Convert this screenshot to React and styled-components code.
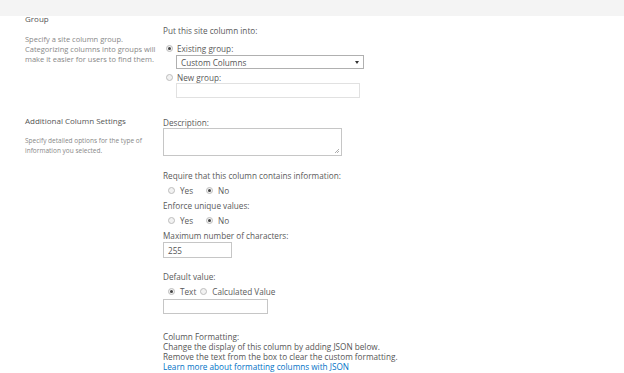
import React from 'react';
import styled, { createGlobalStyle } from 'styled-components';

const GlobalStyle = createGlobalStyle`
  body {
    margin: 0;
    background: #ffffff;
    font-family: "Open Sans", "Noto Sans", sans-serif;
    color: #555555;
  }
`;

const TopBar = styled.div`
  height: 16px;
  background: #f4f4f4;
`;

const Section = styled.div`
  display: grid;
  grid-template-columns: 138px 1fr;
  padding-left: 25px;
  padding-top: ${p => p.$pt || 0}px;
`;

const Info = styled.div`
  display: flex;
  flex-direction: column;
`;

const InfoTitle = styled.div`
  font-size: 8px;
  line-height: 10px;
  color: #555;
  margin-top: ${p => p.$mt || 0}px;
`;

const InfoText = styled.div`
  font-size: ${p => p.$size || 7.5}px;
  line-height: 10px;
  color: #888;
  margin-top: ${p => p.$mt || 0}px;
`;

const Fields = styled.div`
  display: flex;
  flex-direction: column;
  align-items: flex-start;
`;

const Label = styled.div`
  height: 12px;
  display: flex;
  align-items: center;
  font-size: 8.2px;
  white-space: nowrap;
  color: #5a5a5a;
  margin-top: ${p => p.$mt || 0}px;
`;

const Options = styled.div`
  height: 12px;
  display: flex;
  align-items: center;
  gap: ${p => p.$gap || 0}px;
  padding-left: ${p => p.$indent || 0}px;
  margin-top: ${p => p.$mt || 0}px;
`;

const Option = styled.label`
  display: flex;
  align-items: center;
  gap: ${p => p.$gap || 4}px;
  font-size: 8.2px;
  color: #5a5a5a;
  white-space: nowrap;
`;

const Dot = styled.span`
  width: 7px;
  height: 7px;
  box-sizing: border-box;
  border-radius: 50%;
  border: 1px solid #bdbdbd;
  background: #f2f2f2;
  display: flex;
  align-items: center;
  justify-content: center;

  &::after {
    content: '';
    width: 3px;
    height: 3px;
    border-radius: 50%;
    background: ${p => (p.$on ? '#444' : 'transparent')};
  }
`;

const Box = styled.div`
  box-sizing: border-box;
  width: ${p => p.$w}px;
  height: ${p => p.$h}px;
  margin-left: ${p => p.$ml || 0}px;
  margin-top: ${p => p.$mt || 0}px;
  border: 1px solid ${p => p.$border || '#c6c6c6'};
  background: #fff;
  display: flex;
  align-items: center;
  padding: 0 4px;
  font-size: 8.2px;
  color: #555;
  position: relative;
`;

const Caret = styled.span`
  margin-left: auto;
  width: 0;
  height: 0;
  border-left: 2px solid transparent;
  border-right: 2px solid transparent;
  border-top: 3px solid #333;
`;

const Grip = styled.svg`
  position: absolute;
  right: 1px;
  bottom: 1px;
`;

const Note = styled.div`
  margin-top: ${p => p.$mt || 0}px;
  font-size: 8.2px;
  line-height: 10px;
  color: #555;
  white-space: nowrap;
`;

const Link = styled.a`
  color: #0072c6;
  text-decoration: none;
`;

const Radio = ({ on, gap, children }) => (
  <Option $gap={gap}>
    <Dot $on={on} />
    {children}
  </Option>
);

export default function App() {
  return (
    <>
      <GlobalStyle />
      <TopBar />
      <Section>
        <Info>
          <InfoTitle $mt={-2}>Group</InfoTitle>
          <InfoText $mt={10}>
            Specify a site column group.
            <br />
            Categorizing columns into groups will
            <br />
            make it easier for users to find them.
          </InfoText>
        </Info>
        <Fields>
          <Label $mt={8}>Put this site column into:</Label>
          <Options $mt={6} $indent={3}>
            <Radio on>Existing group:</Radio>
          </Options>
          <Box $w={188} $h={14} $ml={13} $mt={1} $border="#b0b0b0">
            Custom Columns
            <Caret />
          </Box>
          <Options $mt={2} $indent={3}>
            <Radio>New group:</Radio>
          </Options>
          <Box $w={184} $h={15} $ml={13} $border="#e1e1e1" />
        </Fields>
      </Section>
      <Section $pt={16}>
        <Info>
          <InfoTitle $mt={2}>Additional Column Settings</InfoTitle>
          <InfoText $mt={10} $size={6.5}>
            Specify detailed options for the type of
            <br />
            information you selected.
          </InfoText>
        </Info>
        <Fields>
          <Label $mt={2}>Description:</Label>
          <Box $w={179} $h={28}>
            <Grip width="6" height="6" viewBox="0 0 6 6">
              <path d="M5 1 L1 5 M5 3 L3 5" stroke="#999" strokeWidth="0.8" />
            </Grip>
          </Box>
          <Label $mt={13}>Require that this column contains information:</Label>
          <Options $mt={3} $indent={5} $gap={13}>
            <Radio gap={5}>Yes</Radio>
            <Radio on gap={5}>No</Radio>
          </Options>
          <Label $mt={3}>Enforce unique values:</Label>
          <Options $mt={3} $indent={5} $gap={13}>
            <Radio gap={5}>Yes</Radio>
            <Radio on gap={5}>No</Radio>
          </Options>
          <Label $mt={3}>Maximum number of characters:</Label>
          <Box $w={69} $h={16} $mt={1}>255</Box>
          <Label $mt={12}>Default value:</Label>
          <Options $mt={3} $indent={5} $gap={4}>
            <Radio on gap={5}>Text</Radio>
            <Radio gap={5}>Calculated Value</Radio>
          </Options>
          <Box $w={105} $h={15} $mt={2} />
          <Note $mt={18}>
            Column Formatting:
            <br />
            Change the display of this column by adding JSON below.
            <br />
            Remove the text from the box to clear the custom formatting.
            <br />
            <Link href="#">Learn more about formatting columns with JSON</Link>
          </Note>
        </Fields>
      </Section>
    </>
  );
}
